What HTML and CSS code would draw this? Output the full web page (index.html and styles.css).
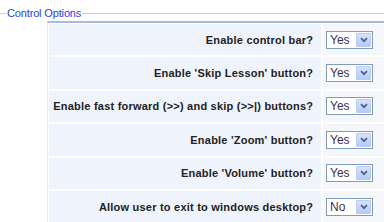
FILE: index.html
```html
<!DOCTYPE html>
<html>
<head>
<meta charset="utf-8">
<link rel="stylesheet" href="styles.css">
</head>
<body>
<div class="legend-row">
  <span class="rule short"></span>
  <span class="legend">Control Options</span>
  <span class="rule long"></span>
</div>
<div class="options">
  <div class="grid">
    <div class="label">Enable control bar?</div>
    <div class="field"><span class="select"><span class="value">Yes</span><span class="btn"><svg width="8" height="6" viewBox="0 0 8 6"><path d="M1 1.2 L4 4.2 L7 1.2" fill="none" stroke="#4a5f8a" stroke-width="1.7"/></svg></span></span></div>

    <div class="label">Enable 'Skip Lesson' button?</div>
    <div class="field"><span class="select"><span class="value">Yes</span><span class="btn"><svg width="8" height="6" viewBox="0 0 8 6"><path d="M1 1.2 L4 4.2 L7 1.2" fill="none" stroke="#4a5f8a" stroke-width="1.7"/></svg></span></span></div>

    <div class="label">Enable fast forward (&gt;&gt;) and skip (&gt;&gt;|) buttons?</div>
    <div class="field"><span class="select"><span class="value">Yes</span><span class="btn"><svg width="8" height="6" viewBox="0 0 8 6"><path d="M1 1.2 L4 4.2 L7 1.2" fill="none" stroke="#4a5f8a" stroke-width="1.7"/></svg></span></span></div>

    <div class="label">Enable 'Zoom' button?</div>
    <div class="field"><span class="select"><span class="value">Yes</span><span class="btn"><svg width="8" height="6" viewBox="0 0 8 6"><path d="M1 1.2 L4 4.2 L7 1.2" fill="none" stroke="#4a5f8a" stroke-width="1.7"/></svg></span></span></div>

    <div class="label">Enable 'Volume' button?</div>
    <div class="field"><span class="select"><span class="value">Yes</span><span class="btn"><svg width="8" height="6" viewBox="0 0 8 6"><path d="M1 1.2 L4 4.2 L7 1.2" fill="none" stroke="#4a5f8a" stroke-width="1.7"/></svg></span></span></div>

    <div class="label">Allow user to exit to windows desktop?</div>
    <div class="field"><span class="select"><span class="value">No</span><span class="btn"><svg width="8" height="6" viewBox="0 0 8 6"><path d="M1 1.2 L4 4.2 L7 1.2" fill="none" stroke="#4a5f8a" stroke-width="1.7"/></svg></span></span></div>
  </div>
</div>
</body>
</html>
```
FILE: styles.css
```css
html, body {
  margin: 0;
  padding: 0;
  background: #ffffff;
  overflow: hidden;
}
body {
  font-family: "Liberation Sans", Arial, sans-serif;
  width: 384px;
  height: 222px;
}
.legend-row {
  display: flex;
  align-items: center;
  height: 13px;
  margin-top: 7px;
}
.rule {
  height: 1px;
  background: #d0d0bf;
}
.rule.short {
  width: 6px;
}
.rule.long {
  flex: 1;
}
.legend {
  font-size: 11px;
  line-height: 13px;
  color: #2a3fe0;
  padding: 0 1px;
  letter-spacing: -0.15px;
}
.options {
  margin-left: 47px;
  margin-top: 1px;
  border-top: 2px solid #a9b8dc;
  border-left: 1px solid #e6eaf3;
  padding: 1px 0 0 1px;
}
.grid {
  display: grid;
  grid-template-columns: 272px 1fr;
  grid-auto-rows: 31.4px;
  gap: 2px;
}
.label {
  background: #eff3fc;
  display: flex;
  align-items: center;
  justify-content: flex-end;
  padding-right: 7.8px;
  font-size: 11px;
  font-weight: bold;
  color: #222222;
  white-space: nowrap;
  letter-spacing: 0.22px;
}
.field {
  background: #f5f7fb;
  display: flex;
  align-items: center;
  padding-left: 3px;
}
.select {
  box-sizing: border-box;
  width: 47px;
  height: 18px;
  border: 1px solid #7f9db9;
  background: #ffffff;
  display: flex;
  align-items: center;
  padding: 1px;
}
.value {
  flex: 1;
  padding-left: 2px;
  font-size: 12px;
  line-height: 14px;
  color: #3a2f55;
}
.btn {
  box-sizing: border-box;
  width: 15px;
  height: 14px;
  background: linear-gradient(#d6e2fd, #b7cbf8);
  border: 1px solid #b9cbf3;
  border-radius: 1px;
  display: flex;
  align-items: center;
  justify-content: center;
}
.btn svg {
  display: block;
}
```
